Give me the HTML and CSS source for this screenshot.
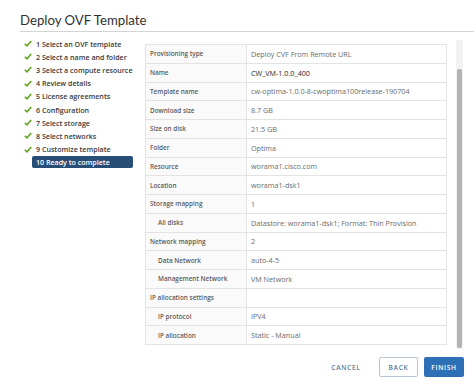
FILE: index.html
```html
<!DOCTYPE html>
<html lang="en">
<head>
    <meta charset="UTF-8">
    <title>Deploy OVF Template</title>
    <link rel="stylesheet" href="styles.css">
</head>
<body>
    <div class="wizard">
        <h2 class="title">Deploy OVF Template</h2>
        <div class="main">
            <ul class="steps">
                <li><span class="check"><svg width="8" height="7" viewBox="0 0 8 7"><polyline points="0.8,3.8 3,5.8 7.2,1" fill="none" stroke="#62a420" stroke-width="1.6"/></svg></span><span class="label">1 Select an OVF template</span></li>
                <li><span class="check"><svg width="8" height="7" viewBox="0 0 8 7"><polyline points="0.8,3.8 3,5.8 7.2,1" fill="none" stroke="#62a420" stroke-width="1.6"/></svg></span><span class="label">2 Select a name and folder</span></li>
                <li><span class="check"><svg width="8" height="7" viewBox="0 0 8 7"><polyline points="0.8,3.8 3,5.8 7.2,1" fill="none" stroke="#62a420" stroke-width="1.6"/></svg></span><span class="label">3 Select a compute resource</span></li>
                <li><span class="check"><svg width="8" height="7" viewBox="0 0 8 7"><polyline points="0.8,3.8 3,5.8 7.2,1" fill="none" stroke="#62a420" stroke-width="1.6"/></svg></span><span class="label">4 Review details</span></li>
                <li><span class="check"><svg width="8" height="7" viewBox="0 0 8 7"><polyline points="0.8,3.8 3,5.8 7.2,1" fill="none" stroke="#62a420" stroke-width="1.6"/></svg></span><span class="label">5 License agreements</span></li>
                <li><span class="check"><svg width="8" height="7" viewBox="0 0 8 7"><polyline points="0.8,3.8 3,5.8 7.2,1" fill="none" stroke="#62a420" stroke-width="1.6"/></svg></span><span class="label">6 Configuration</span></li>
                <li><span class="check"><svg width="8" height="7" viewBox="0 0 8 7"><polyline points="0.8,3.8 3,5.8 7.2,1" fill="none" stroke="#62a420" stroke-width="1.6"/></svg></span><span class="label">7 Select storage</span></li>
                <li><span class="check"><svg width="8" height="7" viewBox="0 0 8 7"><polyline points="0.8,3.8 3,5.8 7.2,1" fill="none" stroke="#62a420" stroke-width="1.6"/></svg></span><span class="label">8 Select networks</span></li>
                <li><span class="check"><svg width="8" height="7" viewBox="0 0 8 7"><polyline points="0.8,3.8 3,5.8 7.2,1" fill="none" stroke="#62a420" stroke-width="1.6"/></svg></span><span class="label">9 Customize template</span></li>
                <li class="active"><span class="check"></span><span class="label">10 Ready to complete</span></li>
            </ul>
            <div class="content">
                <table class="summary">
                    <colgroup><col class="key-col"><col></colgroup>
                    <tr><td class="key">Provisioning type</td><td>Deploy CVF From Remote URL</td></tr>
                    <tr><td class="key">Name</td><td class="dark">CW_VM-1.0.0_400</td></tr>
                    <tr><td class="key">Template name</td><td>cw-optima-1.0.0-8-cwoptima100release-190704</td></tr>
                    <tr><td class="key">Download size</td><td>8.7 GB</td></tr>
                    <tr><td class="key">Size on disk</td><td>21.5 GB</td></tr>
                    <tr><td class="key">Folder</td><td>Optima</td></tr>
                    <tr><td class="key">Resource</td><td>worama1.cisco.com</td></tr>
                    <tr><td class="key">Location</td><td>worama1-dsk1</td></tr>
                    <tr><td class="key">Storage mapping</td><td>1</td></tr>
                    <tr><td class="key sub">All disks</td><td>Datastore: worama1-dsk1; Format: Thin Provision</td></tr>
                    <tr><td class="key">Network mapping</td><td>2</td></tr>
                    <tr><td class="key sub">Data Network</td><td>auto-4-5</td></tr>
                    <tr><td class="key sub">Management Network</td><td>VM Network</td></tr>
                    <tr><td class="key">IP allocation settings</td><td></td></tr>
                    <tr><td class="key sub">IP protocol</td><td>IPV4</td></tr>
                    <tr><td class="key sub">IP allocation</td><td>Static - Manual</td></tr>
                </table>
                <div class="scrollbar"><div class="thumb"></div></div>
            </div>
        </div>
        <div class="footer">
            <button class="btn link">CANCEL</button>
            <button class="btn outline">BACK</button>
            <button class="btn primary">FINISH</button>
        </div>
    </div>
</body>
</html>
```

FILE: styles.css
```css
body {
    margin: 0;
    padding: 0;
    background: #fff;
    font-family: "Open Sans", Arial, sans-serif;
    color: #333;
}
.wizard {
    width: 474px;
    height: 381px;
    padding: 12px 0 0 20px;
    box-sizing: border-box;
}
.title {
    margin: 0;
    font-family: Lato, "Open Sans", sans-serif;
    font-size: 13.2px;
    font-weight: 400;
    line-height: 17px;
    color: #313131;
    padding-bottom: 2px;
    border-bottom: 1px solid #d4d4d4;
}
.main {
    display: flex;
    margin-top: 5px;
}
.steps {
    list-style: none;
    margin: 0;
    padding: 0;
    width: 113px;
    flex-shrink: 0;
}
.steps li {
    display: flex;
    align-items: center;
    height: 13.2px;
}
.check {
    width: 12px;
    flex-shrink: 0;
    display: flex;
    align-items: center;
    padding-left: 4px;
    box-sizing: border-box;
}
.label {
    flex: 1;
    font-size: 7.1px;
    font-weight: 600;
    color: #3a3a3a;
    padding: 0 4px;
    white-space: nowrap;
    line-height: 12px;
}
.steps li.active .label {
    background: #284e78;
    color: #fff;
    border-radius: 2px;
}
.content {
    display: flex;
    margin-left: 12px;
    height: 310px;
}
.summary {
    margin-top: 7px;
    width: 302px;
    table-layout: fixed;
    border-collapse: collapse;
    border: 1px solid #dcdcdc;
    font-size: 7.2px;
    align-self: flex-start;
}
.key-col {
    width: 101px;
}
.summary td {
    border: 1px solid #e3e3e3;
    height: 17.75px;
    padding: 0 4px;
    color: #6a6a6a;
    white-space: nowrap;
    overflow: hidden;
}
.summary td.key {
    font-size: 6.4px;
    font-weight: 600;
    color: #5a5a5a;
    background: #fafafa;
}
.summary td.sub {
    padding-left: 12px;
}
.summary td.dark {
    color: #1e1e1e;
}
.scrollbar {
    width: 7px;
    margin-left: 9px;
    margin-top: 3px;
    background: #f2f2f2;
    height: 309px;
    display: flex;
    flex-direction: column;
    justify-content: flex-end;
}
.thumb {
    margin: 0 auto 1px;
    width: 5px;
    height: 279px;
    background: #b4b4b4;
    border-radius: 2px;
}
.footer {
    display: flex;
    justify-content: flex-end;
    align-items: center;
    gap: 6px;
    padding-right: 10px;
    margin-top: 10px;
}
.btn {
    font-family: "Open Sans", Arial, sans-serif;
    font-size: 6.6px;
    font-weight: 600;
    letter-spacing: 0.7px;
    height: 20px;
    border-radius: 2px;
    padding: 0;
    cursor: pointer;
}
.link {
    background: none;
    border: none;
    color: #5c7a95;
    width: 38px;
    margin-right: 8px;
}
.outline {
    background: #fff;
    border: 1px solid #b9c6d3;
    color: #5c7a95;
    width: 39px;
}
.primary {
    background: #2e70b6;
    border: none;
    color: #fff;
    width: 40px;
}
```
